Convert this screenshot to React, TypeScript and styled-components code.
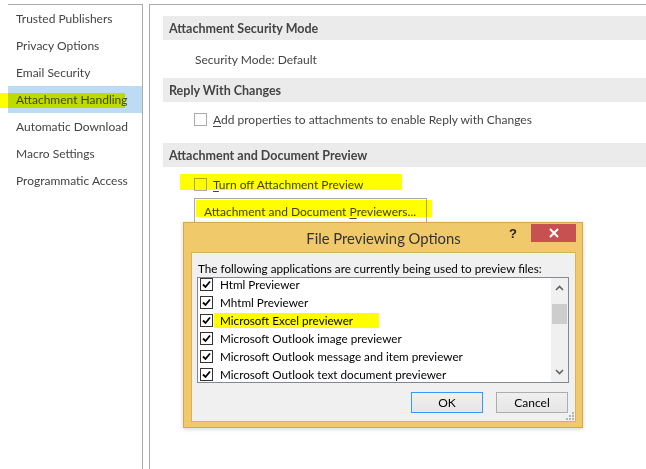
import React from "react";
import styled, { createGlobalStyle } from "styled-components";

const Global = createGlobalStyle`
  html, body { margin: 0; padding: 0; background: #ffffff; }
  body { font-family: "Lato", "Open Sans", sans-serif; }
  * { box-sizing: border-box; }
`;

const Page = styled.div`
  position: relative;
  width: 646px;
  height: 469px;
  display: flex;
  align-items: stretch;
  overflow: hidden;
  background: #fff;
`;

const Sidebar = styled.nav`
  margin: 4px 0 0 8px;
  width: 135px;
  border-top: 1px solid #ababab;
  border-right: 1px solid #ababab;
  display: flex;
  flex-direction: column;
`;

const NavItem = styled.div<{ $active?: boolean }>`
  height: 27px;
  display: flex;
  align-items: center;
  padding-left: 8px;
  font-size: 12px;
  color: #444444;
  background: ${(p) => (p.$active ? "#bcdcf4" : "transparent")};
`;

const Main = styled.main`
  margin: 4px 0 0 6px;
  flex: 1;
  border-top: 1px solid #ababab;
  border-left: 1px solid #ababab;
  padding: 11px 0 0 13px;
  display: flex;
  flex-direction: column;
`;

const SectionHeader = styled.div`
  height: 24px;
  background: #ebebeb;
  padding-left: 6px;
  display: flex;
  align-items: center;
  font-size: 12.5px;
  font-weight: 700;
  color: #444444;
`;

const SettingRow = styled.div<{ $h: number; $indent: number; $pb?: number }>`
  height: ${(p) => p.$h}px;
  padding-left: ${(p) => p.$indent}px;
  padding-bottom: ${(p) => p.$pb ?? 0}px;
  display: flex;
  align-items: center;
  gap: 6px;
  font-size: 12px;
  color: #444444;
`;

const SettingBlock = styled.div`
  display: flex;
  flex-direction: column;
  padding: 11px 0 0 31px;
  gap: 7px;
  height: 81px;
`;

const Check = styled.span`
  width: 13px;
  height: 13px;
  border: 1px solid #ababab;
  background: #fff;
  flex: none;
`;

const Key = styled.span`
  text-decoration: underline;
  text-underline-offset: 2px;
`;

const OfficeButton = styled.div`
  width: 233px;
  height: 26px;
  border: 1px solid #ababab;
  background: #fff;
  display: flex;
  align-items: center;
  padding-left: 9px;
  font-size: 12px;
  color: #444444;
`;

const Marker = styled.div<{ $x: number; $y: number; $w: number; $h: number }>`
  position: absolute;
  left: ${(p) => p.$x}px;
  top: ${(p) => p.$y}px;
  width: ${(p) => p.$w}px;
  height: ${(p) => p.$h}px;
  background: #ffff00;
  mix-blend-mode: multiply;
  pointer-events: none;
  z-index: 5;
`;

const Dialog = styled.div`
  position: absolute;
  left: 183px;
  top: 222px;
  width: 400px;
  height: 206px;
  background: #f0c96a;
  border: 1px solid #d4a94c;
  box-shadow: 0 1px 4px rgba(0, 0, 0, 0.18);
  display: flex;
  flex-direction: column;
  padding: 0 6px 5px 7px;
  z-index: 3;
`;

const TitleBar = styled.div`
  height: 29px;
  display: grid;
  grid-template-columns: 1fr auto 1fr;
  align-items: start;
`;

const Title = styled.div`
  grid-column: 2;
  padding-top: 6px;
  font-size: 14.8px;
  color: #333333;
  white-space: nowrap;
`;

const TitleControls = styled.div`
  grid-column: 3;
  justify-self: end;
  display: flex;
  align-items: flex-start;
  padding-top: 1px;
`;

const Help = styled.div`
  width: 24px;
  height: 18px;
  display: flex;
  align-items: center;
  justify-content: center;
  font-family: "Liberation Sans", sans-serif;
  font-weight: 700;
  font-size: 13px;
  color: #222;
  margin-right: 6px;
`;

const Close = styled.div`
  width: 45px;
  height: 18px;
  background: #c75050;
  display: flex;
  align-items: center;
  justify-content: center;
`;

const Client = styled.div`
  position: relative;
  flex: 1;
  background: #f0f0f0;
  border: 1px solid #d8b25c;
  padding: 6px 6px 0 5px;
  display: flex;
  flex-direction: column;
  font-size: 11.7px;
  color: #000;
`;

const Label = styled.div`
  height: 18px;
  display: flex;
  align-items: center;
  padding-left: 1px;
`;

const ListBox = styled.div`
  height: 106px;
  border: 1px solid #828790;
  background: #fff;
  display: flex;
  overflow: hidden;
`;

const ListItems = styled.div`
  flex: 1;
  margin-top: -3px;
  padding-left: 2px;
  display: flex;
  flex-direction: column;
`;

const ListRow = styled.div`
  height: 18px;
  flex: none;
  display: flex;
  align-items: center;
  gap: 7px;
`;

const ListCheck = styled.span`
  width: 13px;
  height: 13px;
  border: 1px solid #333333;
  background: #fff;
  display: flex;
  align-items: center;
  justify-content: center;
  flex: none;
`;

const ScrollBar = styled.div`
  width: 17px;
  background: #f0f0f0;
  display: flex;
  flex-direction: column;
  align-items: center;
`;

const Arrow = styled.div`
  height: 20px;
  width: 17px;
  display: flex;
  align-items: center;
  justify-content: center;
`;

const Thumb = styled.div`
  width: 15px;
  height: 20px;
  background: #cdcdcd;
  margin-top: 6px;
`;

const Spacer = styled.div`
  flex: 1;
`;

const ButtonRow = styled.div`
  display: flex;
  justify-content: flex-end;
  gap: 13px;
  padding: 9px 1px 0 0;
`;

const DlgButton = styled.div<{ $default?: boolean }>`
  width: 72px;
  height: 21px;
  border: 1px solid ${(p) => (p.$default ? "#3399ff" : "#adadad")};
  background: linear-gradient(#f0f0f0, #e5e5e5);
  display: flex;
  align-items: center;
  justify-content: center;
  font-size: 12px;
  color: #000;
`;

const Grip = styled.svg`
  position: absolute;
  right: 1px;
  bottom: 1px;
`;

const CheckMark = () => (
  <svg width="9" height="9" viewBox="0 0 9 9">
    <path d="M1 4.5 L3.5 7 L8 1.5" fill="none" stroke="#000" strokeWidth="1.8" />
  </svg>
);

const navItems = [
  "Trusted Publishers",
  "Privacy Options",
  "Email Security",
  "Attachment Handling",
  "Automatic Download",
  "Macro Settings",
  "Programmatic Access",
];

const previewers = [
  "Html Previewer",
  "Mhtml Previewer",
  "Microsoft Excel previewer",
  "Microsoft Outlook image previewer",
  "Microsoft Outlook message and item previewer",
  "Microsoft Outlook text document previewer",
];

export default function App() {
  return (
    <Page>
      <Global />
      <Sidebar>
        {navItems.map((n) => (
          <NavItem key={n} $active={n === "Attachment Handling"}>
            {n}
          </NavItem>
        ))}
      </Sidebar>
      <Main>
        <SectionHeader>Attachment Security Mode</SectionHeader>
        <SettingRow $h={38} $indent={32}>
          Security Mode: Default
        </SettingRow>
        <SectionHeader>Reply With Changes</SectionHeader>
        <SettingRow $h={41} $indent={31} $pb={7}>
          <Check />
          <span>
            <Key>A</Key>dd properties to attachments to enable Reply with Changes
          </span>
        </SettingRow>
        <SectionHeader>Attachment and Document Preview</SectionHeader>
        <SettingBlock>
          <SettingRow $h={13} $indent={0}>
            <Check />
            <span>
              <Key>T</Key>urn off Attachment Preview
            </span>
          </SettingRow>
          <OfficeButton>
            Attachment and Document&nbsp;<Key>P</Key>reviewers...
          </OfficeButton>
        </SettingBlock>
      </Main>

      <Dialog>
        <TitleBar>
          <Title>File Previewing Options</Title>
          <TitleControls>
            <Help>?</Help>
            <Close>
              <svg width="10" height="10" viewBox="0 0 10 10">
                <path d="M1 1 L9 9 M9 1 L1 9" stroke="#fff" strokeWidth="2" />
              </svg>
            </Close>
          </TitleControls>
        </TitleBar>
        <Client>
          <Label>The following applications are currently being used to preview files:</Label>
          <ListBox>
            <ListItems>
              {previewers.map((p) => (
                <ListRow key={p}>
                  <ListCheck>
                    <CheckMark />
                  </ListCheck>
                  {p}
                </ListRow>
              ))}
            </ListItems>
            <ScrollBar>
              <Arrow>
                <svg width="9" height="6" viewBox="0 0 9 6">
                  <path d="M1 5 L4.5 1.5 L8 5" fill="none" stroke="#606060" strokeWidth="1.6" />
                </svg>
              </Arrow>
              <Thumb />
              <Spacer />
              <Arrow>
                <svg width="9" height="6" viewBox="0 0 9 6">
                  <path d="M1 1 L4.5 4.5 L8 1" fill="none" stroke="#606060" strokeWidth="1.6" />
                </svg>
              </Arrow>
            </ScrollBar>
          </ListBox>
          <ButtonRow>
            <DlgButton $default>OK</DlgButton>
            <DlgButton>Cancel</DlgButton>
          </ButtonRow>
          <Grip width="8" height="8" viewBox="0 0 8 8">
            <g fill="#b5b5b5">
              <rect x="6" y="0" width="2" height="2" />
              <rect x="3" y="3" width="2" height="2" />
              <rect x="6" y="3" width="2" height="2" />
              <rect x="0" y="6" width="2" height="2" />
              <rect x="3" y="6" width="2" height="2" />
              <rect x="6" y="6" width="2" height="2" />
            </g>
          </Grip>
        </Client>
      </Dialog>

      <Marker $x={0} $y={93} $w={125} $h={15} />
      <Marker $x={180} $y={174} $w={222} $h={16} />
      <Marker $x={196} $y={200} $w={236} $h={17} />
      <Marker $x={214} $y={313} $w={165} $h={15} />
    </Page>
  );
}
